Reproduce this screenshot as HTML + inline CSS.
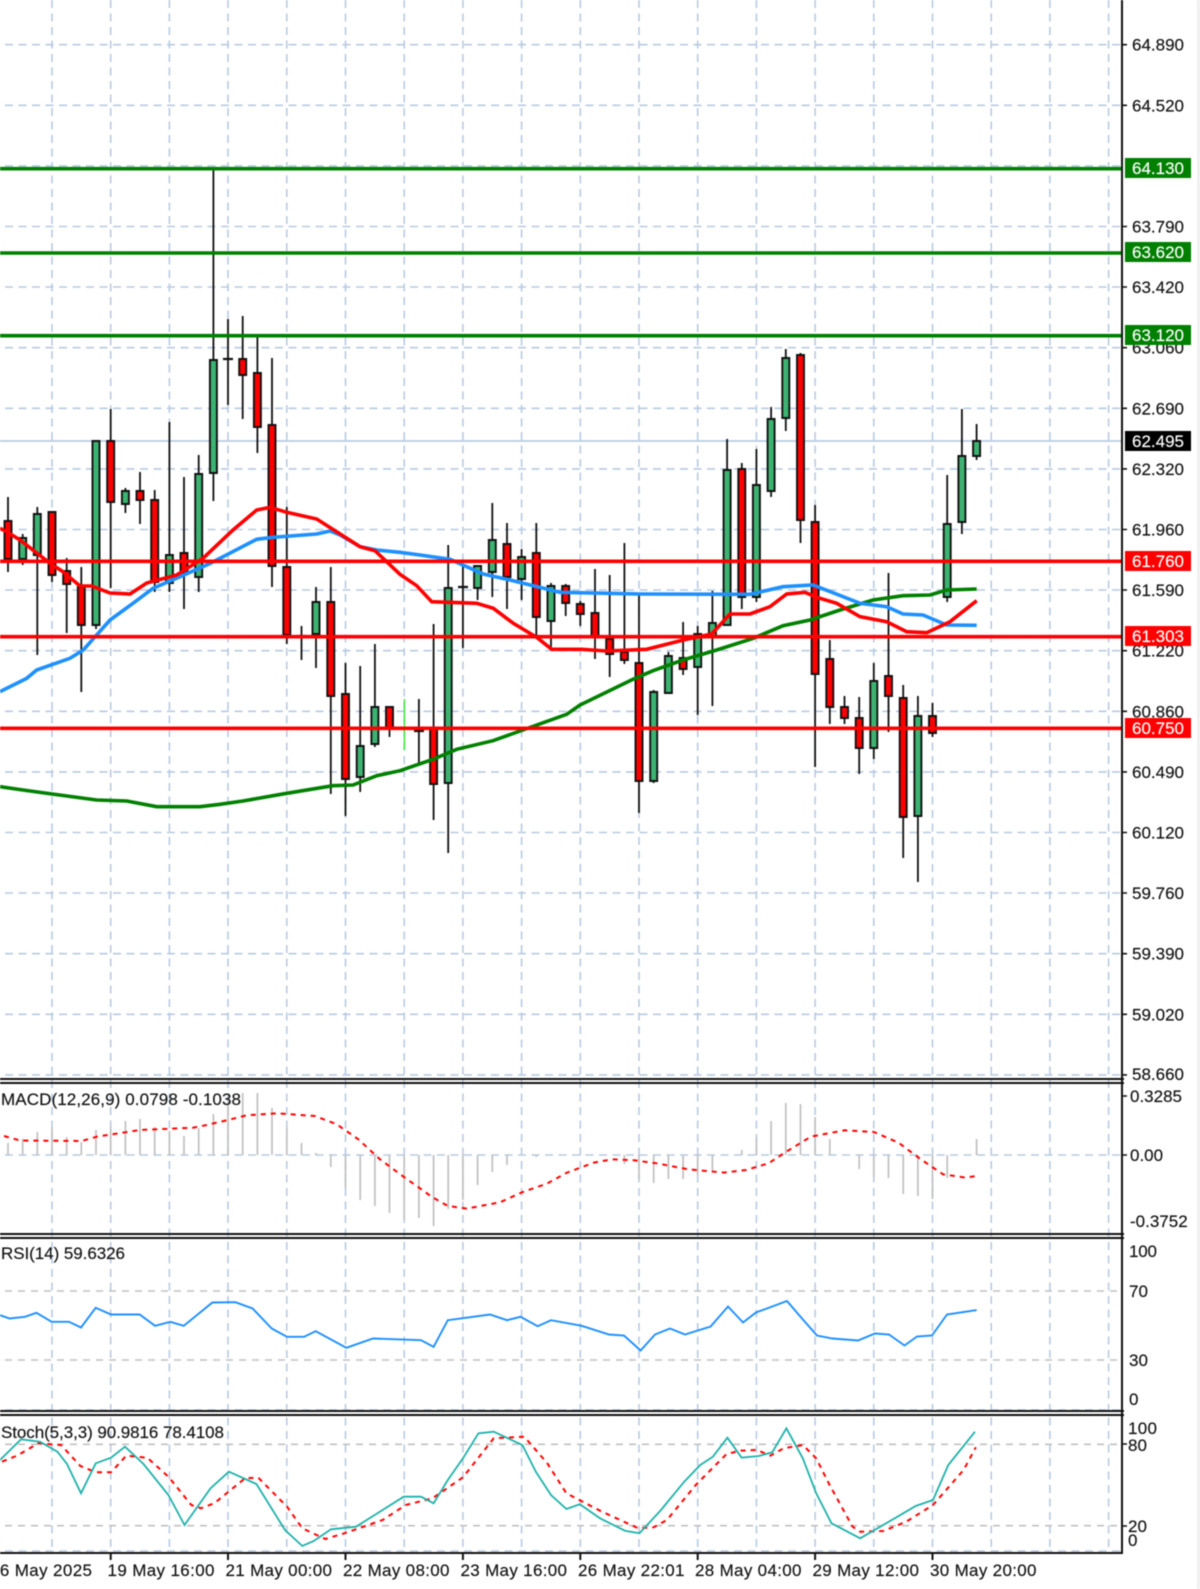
<!DOCTYPE html>
<html><head><meta charset="utf-8"><title>Chart</title>
<style>
html,body{margin:0;padding:0;background:#fff;width:1200px;height:1589px;overflow:hidden}
svg{display:block;filter:blur(.4px)}
text{font-family:"Liberation Sans",sans-serif;font-size:17px;fill:#111;stroke:#111;stroke-width:.15px}
.w{fill:#fff;stroke:#fff}
</style></head><body>
<svg width="1200" height="1589" viewBox="0 0 1200 1589" xmlns="http://www.w3.org/2000/svg">
<rect width="1200" height="1589" fill="#fff"/>
<rect x="1197" width="3" height="1589" fill="#f0f0f0"/>
<!-- vertical grid -->
<path fill="none" stroke="#b8cae2" stroke-width="1.6" stroke-dasharray="8 5.5" d="M52 0V1552M110.7 0V1552M169.4 0V1552M228 0V1552M286.8 0V1552M345.5 0V1552M404.2 0V1552M462.9 0V1552M521.6 0V1552M580.3 0V1552M639 0V1552M697.7 0V1552M756.4 0V1552M815.1 0V1552M873.8 0V1552M932.5 0V1552M991.2 0V1552M1049.9 0V1552M1108.6 0V1552"/>
<!-- horizontal grid -->
<path fill="none" stroke="#b8cae2" stroke-width="1.6" stroke-dasharray="8 5.5" d="M5 44.7H1122M5 105.3H1122M5 165.9H1122M5 226.5H1122M5 287H1122M5 347.7H1122M5 408.3H1122M5 468.9H1122M5 529.5H1122M5 590H1122M5 650.7H1122M5 711.3H1122M5 771.9H1122M5 832.5H1122M5 893H1122M5 953.7H1122M5 1014.3H1122M5 1074.9H1122M5 1155H1122M5 1410H1122M5 1551H1122"/>
<!-- current price -->
<path d="M0 441H1122" stroke="#b8cae2" stroke-width="1.7" fill="none"/>
<!-- lime wick -->
<path d="M404.4 699V750" stroke="#32e632" stroke-width="1.4" fill="none"/>
<!-- wicks -->
<path fill="none" stroke="#111" stroke-width="1.8" d="M8 497V572M22.7 534V565M37.3 507V655M52 512V582M66.7 558V633M81.3 567V692M96 441V629M110.7 409V588M125.4 488V513M140 472V524M154.7 490V592M169.4 422V592M184 477V609M198.7 455V592M213.4 170V501M228 319V405M242.7 316V419M257.4 337V453M272 358V587M286.8 507V644M301.5 626V660M316 587V668M330.8 567V794M345.5 663V816M360.2 666V792M374.9 644V747M389.5 707V737M418.9 699V763M433.6 624V820M448.2 545V853M462.9 565V648M477.6 565V600M492.3 503V597M507 523V609M521.6 549V600M536.3 523V637M551 583V648M565.7 584V616M580.3 601V626M595 569V659M609.7 575V677M624.4 543V664M639 595V813M653.7 690V783M668.4 652V693M683.1 622V675M697.7 626V715M712.4 591V706M727.1 439V625M741.8 463V609M756.4 449V602M771.1 407V497M785.8 349V431M800.5 353V543M815.1 505V767M829.8 640V724M844.5 696V724M859.2 697V774M873.8 663V759M888.5 573V732M903.2 685V858M917.9 696V882M932.5 703V737M947.2 475V602M961.9 409V534M976.6 424V460"/>
<!-- dojis -->
<path fill="none" stroke="#111" stroke-width="2.2" d="M223 359H233M296.5 636H306.5M414 731H424M458 587H468"/>
<!-- green bodies -->
<path fill="#3cb371" stroke="#111" stroke-width="1.9" d="M19.2 538h7V559h-7zM33.8 514h7V555h-7zM92.5 441h7V625h-7zM121.9 491h7V504h-7zM165.9 555h7V583h-7zM195.2 474h7V577h-7zM209.9 360h7V473h-7zM312.5 602h7V634h-7zM356.7 746h7V777h-7zM371.4 707h7V744h-7zM444.7 588h7V783h-7zM474.1 566h7V588h-7zM488.8 540h7V572h-7zM518.1 557h7V579h-7zM547.5 586h7V621h-7zM650.2 692h7V781h-7zM664.9 656h7V693h-7zM694.2 634h7V667h-7zM708.9 623h7V636h-7zM723.6 470h7V625h-7zM752.9 485h7V597h-7zM767.6 419h7V491h-7zM782.3 358h7V418h-7zM870.3 681h7V748h-7zM914.4 716h7V816h-7zM943.7 524h7V597h-7zM958.4 456h7V522h-7zM973.1 441h7V456h-7z"/>
<!-- red bodies -->
<path fill="#f00" stroke="#111" stroke-width="1.9" d="M4.5 521h7V559h-7zM48.5 512h7V575h-7zM63.2 571h7V584h-7zM77.8 587h7V625h-7zM107.2 441h7V502h-7zM136.5 491h7V500h-7zM151.2 500h7V582h-7zM180.5 553h7V573h-7zM239.2 359h7V375h-7zM253.9 373h7V427h-7zM268.5 425h7V566h-7zM283.3 567h7V635h-7zM327.3 602h7V696h-7zM342 694h7V779h-7zM386 707h7V728h-7zM430.1 728h7V784h-7zM503.5 544h7V577h-7zM532.8 553h7V617h-7zM562.2 586h7V603h-7zM576.8 604h7V614h-7zM591.5 613h7V637h-7zM606.2 639h7V654h-7zM620.9 652h7V660h-7zM635.5 663h7V781h-7zM679.6 658h7V669h-7zM738.3 469h7V597h-7zM797 355h7V520h-7zM811.6 522h7V674h-7zM826.3 659h7V707h-7zM841 707h7V718h-7zM855.7 718h7V748h-7zM885 676h7V696h-7zM899.7 698h7V817h-7zM929 716h7V733h-7z"/>
<!-- moving averages -->
<polyline fill="none" stroke="#008000" stroke-width="3.6" points="0,786.7 23,790 52,794 96.7,800 126.7,801 156.7,806.7 200,806.7 220,804.3 243,801 286.7,793.3 333,785.7 353,785 376.7,775.7 400,770.7 433,759.3 456.7,749.3 493,740.7 566.7,714.3 580,705 633,679.3 653,670.7 683,660 716.7,650 753.3,638.3 783,625.7 810,620 840,610 873,600 903,595.7 930,595 946.7,590 976.7,589"/>
<polyline fill="none" stroke="#1e90ff" stroke-width="3.6" points="0,691.7 26.7,678.3 36.7,670 70,658.3 83.3,650 110,620 133,603.3 153,588.3 180,576.7 210,563.5 256.7,539.3 273,537.3 316.7,534 330,531 340,535 360,546.7 376.7,550 400,552.3 420,555 450,559.3 483.3,574 510,580 560,592.3 640,594 750,594.3 783,586.7 813,585 860,603.3 886.7,606.7 903,614 923,615 946.7,625 976.7,625.3"/>
<polyline fill="none" stroke="#f00" stroke-width="3.6" points="0,528.3 6.7,531.7 20,540 50,563.3 63,571.7 80,586 91.7,586 110,593 130,594 146.7,583 176.7,575 203,558.3 233,530 256.7,510 270,507.3 286.7,512.3 316.7,519 360,546.7 375,550.7 400,574.3 416.7,585.7 431.7,601.7 476.7,603.3 493.3,608.3 513.3,623.3 536.7,637.3 551.7,649.3 581.7,649.3 606.7,651 646.7,649.3 683.3,640 711.7,634 730,614 750,614 770,606.7 786.7,594 805,592.3 816.7,597.3 836.7,603.3 860,616.7 886.7,621.7 906.7,631.7 926.7,632.7 950,621.7 976.7,600.7"/>
<!-- horizontal levels -->
<path fill="none" stroke="#008000" stroke-width="3.6" d="M0 168.7H1123M0 253H1123M0 335.7H1123"/>
<path fill="none" stroke="#f00" stroke-width="3.6" d="M0 561.3H1123M0 636.7H1123M0 728.3H1123"/>
<!-- price axis labels -->
<path fill="none" stroke="#111" stroke-width="1.6" d="M1122 44.7h5M1122 105.3h5M1122 226.5h5M1122 287h5M1122 347.7h5M1122 408.3h5M1122 468.9h5M1122 529.5h5M1122 590h5M1122 650.7h5M1122 711.3h5M1122 771.9h5M1122 832.5h5M1122 893h5M1122 953.7h5M1122 1014.3h5M1122 1074.9h5M1122 1096h5M1122 1155h5M1122 1444h5M1122 1526h5"/>
<text x="1132" y="50.7">64.890</text>
<text x="1132" y="111.3">64.520</text>
<text x="1132" y="232.5">63.790</text>
<text x="1132" y="293">63.420</text>
<text x="1132" y="353.7">63.060</text>
<text x="1132" y="414.3">62.690</text>
<text x="1132" y="474.9">62.320</text>
<text x="1132" y="535.5">61.960</text>
<text x="1132" y="596">61.590</text>
<text x="1132" y="656.7">61.220</text>
<text x="1132" y="717.3">60.860</text>
<text x="1132" y="777.9">60.490</text>
<text x="1132" y="838.5">60.120</text>
<text x="1132" y="899">59.760</text>
<text x="1132" y="959.7">59.390</text>
<text x="1132" y="1020.3">59.020</text>
<text x="1132" y="1079.9">58.660</text>
<rect x="1125" y="158" width="66" height="20" fill="#008000"/><text class="w" x="1132" y="174">64.130</text>
<rect x="1125" y="242" width="66" height="20" fill="#008000"/><text class="w" x="1132" y="258">63.620</text>
<rect x="1125" y="325" width="66" height="20" fill="#008000"/><text class="w" x="1132" y="341">63.120</text>
<rect x="1125" y="431" width="66" height="20" fill="#000"/><text class="w" x="1132" y="447">62.495</text>
<rect x="1125" y="551" width="66" height="20" fill="#f00"/><text class="w" x="1132" y="567">61.760</text>
<rect x="1125" y="626" width="66" height="20" fill="#f00"/><text class="w" x="1132" y="642">61.303</text>
<rect x="1125" y="718" width="66" height="20" fill="#f00"/><text class="w" x="1132" y="734">60.750</text>
<!-- MACD -->
<path fill="none" stroke="#c0c0c0" stroke-width="1.7" d="M8 1155V1143M22.7 1155V1139M37.3 1155V1132M52 1155V1128M66.7 1155V1137M81.3 1155V1142M96 1155V1130M110.7 1155V1127M125.4 1155V1121M140 1155V1119M154.7 1155V1127M169.4 1155V1131M184 1155V1136M198.7 1155V1128M213.4 1155V1114M228 1155V1101M242.7 1155V1093M257.4 1155V1093M272 1155V1108M286.8 1155V1128M301.5 1155V1143M316 1155V1153M330.8 1155V1167M345.5 1155V1188M360.2 1155V1200M374.9 1155V1206M389.5 1155V1213M404.2 1155V1220M418.9 1155V1218M433.6 1155V1226M448.2 1155V1209M462.9 1155V1200M477.6 1155V1185M492.3 1155V1172M507 1155V1165M536.3 1155V1157M624.4 1155V1164M639 1155V1179M653.7 1155V1183M668.4 1155V1179M683.1 1155V1179M697.7 1155V1175M712.4 1155V1171M741.8 1155V1150M756.4 1155V1138M771.1 1155V1121M785.8 1155V1103M800.5 1155V1104M815.1 1155V1117M829.8 1155V1139M859.2 1155V1169M873.8 1155V1177M888.5 1155V1178M903.2 1155V1194M917.9 1155V1196M932.5 1155V1199M947.2 1155V1178M976.6 1155V1139"/>
<polyline fill="none" stroke="#f00" stroke-width="2" stroke-dasharray="5 5" points="4,1136 20,1140.5 81.7,1141 96.7,1136.7 140,1130 193,1127.7 206.7,1125 226.7,1120.3 246.7,1115.3 276.7,1113.3 315,1116 336.7,1124.3 358.3,1139.3 380,1159.3 403,1176.3 433,1197.6 448,1206 466.7,1208.6 500,1202.3 522,1192.3 547,1183.6 567,1172.6 594,1162.6 612,1159.3 634,1160.3 656.7,1163.3 688,1169.3 724,1172.6 746,1170 768.6,1163.3 786.5,1151.6 811,1136.6 844.7,1130.3 873.8,1132 898.4,1142.6 920.8,1159.3 943,1174.3 965.5,1177.6 976.7,1176"/>
<text x="1" y="1105" textLength="240">MACD(12,26,9) 0.0798 -0.1038</text>
<text x="1130" y="1102">0.3285</text>
<text x="1130" y="1161">0.00</text>
<text x="1130" y="1227">-0.3752</text>
<!-- RSI -->
<path fill="none" stroke="#c0c0c0" stroke-width="1.6" stroke-dasharray="7 6" d="M5 1291H1122M5 1360H1122"/>
<polyline fill="none" stroke="#1e90ff" stroke-width="1.9" transform="translate(0,-1.5)" points="0,1316.7 9.6,1320 25,1318.3 36.4,1314.3 51.7,1323.3 69,1323.3 81,1329 95.7,1309.3 111,1316 139.7,1316 155,1327.3 170.3,1323.3 183.7,1327.3 212.4,1304 235.4,1303.7 252.6,1310 271.7,1330 287,1338.3 304,1338.3 315.7,1332.7 346.4,1349.3 373,1340 421,1341.7 433.6,1348.3 447.8,1321.7 490,1316 507,1321.7 520.5,1318.3 537.7,1327.7 551,1321.7 581.7,1327.3 609,1336 624,1337 640.6,1352 655,1336 670,1330 685,1336 710.6,1328 728,1308 743,1324 756,1314 787,1302.5 802,1320 817,1337 832.5,1340 858,1342 875,1335 889,1336 904.5,1347 917,1338 932,1337 947,1316 976.7,1311.6"/>
<text x="1" y="1259" textLength="124">RSI(14) 59.6326</text>
<text x="1129" y="1257" textLength="28">100</text>
<text x="1129" y="1297">70</text>
<text x="1129" y="1366">30</text>
<text x="1129" y="1405">0</text>
<!-- Stochastic -->
<path fill="none" stroke="#c0c0c0" stroke-width="1.6" stroke-dasharray="7 6" d="M5 1444.3H1122M5 1525.7H1122"/>
<polyline fill="none" stroke="#f00" stroke-width="2" stroke-dasharray="5 5" points="2,1461.7 17,1455.7 38.3,1443.3 61,1445 80.4,1466 95.7,1472.3 111,1472.3 126.3,1455.7 147.3,1457.7 168.4,1476.7 191.3,1505 201,1508.3 214.3,1503.3 245,1478.3 258.3,1477.7 287,1506.7 302.3,1528.3 325.3,1539 344.4,1533.3 382.7,1520 405.7,1505 432.5,1498.3 463,1477.3 493.7,1438.3 524.3,1436.7 547.3,1463.3 566.4,1493.3 600,1510.7 611.5,1516 638.3,1528.3 653.6,1527.3 667,1520 695.7,1485 726.3,1454.3 739.7,1450.7 757,1450 770.3,1455.7 783.7,1448.3 802.8,1445 816.2,1458.3 829.6,1485 852.6,1526.7 860.2,1531.7 883.2,1531 906.2,1521.7 933,1505 963.6,1470 975.8,1447.3"/>
<polyline fill="none" stroke="#20b2aa" stroke-width="1.8" points="0,1460 21,1439.3 40,1441.7 57.4,1451.7 67,1464 81,1493.3 95.7,1463.3 111,1457.7 125,1446.7 143.5,1464 168.4,1495 184.5,1525 210.5,1488.3 228.9,1471.7 256.4,1484 285,1530 302.3,1546 313.8,1541 331,1529.3 356,1526.7 403.7,1496.7 421,1496.7 433.6,1503.3 447.8,1480 463,1458.3 478.4,1433.3 493.7,1431.7 522.4,1445 535.8,1471.7 551,1495 566.4,1509 579.8,1504.3 600,1518.3 624.9,1530.7 639.4,1533.3 661,1510 684.2,1481.7 700.3,1465 712.9,1456.7 727.4,1437.7 741.6,1457.7 758.8,1456 772.2,1452.3 786.4,1428.3 802.8,1458.3 816.2,1493.3 831.5,1523.3 860.2,1538.3 894.7,1518.3 915.7,1506 933,1500 948.3,1465 975,1431.7"/>
<text x="1" y="1438" textLength="223">Stoch(5,3,3) 90.9816 78.4108</text>
<text x="1128" y="1434" textLength="29">100</text>
<text x="1128" y="1451">80</text>
<text x="1128" y="1532">20</text>
<text x="1128" y="1546">0</text>
<!-- panel separators and axes -->
<path fill="none" stroke="#111" stroke-width="2" d="M0 1079H1124M0 1083H1124M0 1234H1124M0 1238H1124M0 1411H1124M0 1415H1124M0 1553H1123M1122 0V1554"/>
<path fill="none" stroke="#111" stroke-width="2" d="M110.7 1553v7M228 1553v7M345.5 1553v7M462.9 1553v7M580.3 1553v7M697.7 1553v7M815.1 1553v7M932.5 1553v7"/>
<!-- date labels -->
<text x="-10" y="1576" textLength="102">16 May 2025</text>
<text x="107.5" y="1576" textLength="107">19 May 16:00</text>
<text x="225.5" y="1576" textLength="106.5">21 May 00:00</text>
<text x="343" y="1576" textLength="106.5">22 May 08:00</text>
<text x="460.5" y="1576" textLength="106.5">23 May 16:00</text>
<text x="578" y="1576" textLength="106.5">26 May 22:01</text>
<text x="695" y="1576" textLength="106.5">28 May 04:00</text>
<text x="812.5" y="1576" textLength="106.5">29 May 12:00</text>
<text x="930" y="1576" textLength="106.5">30 May 20:00</text>
</svg>
</body></html>
